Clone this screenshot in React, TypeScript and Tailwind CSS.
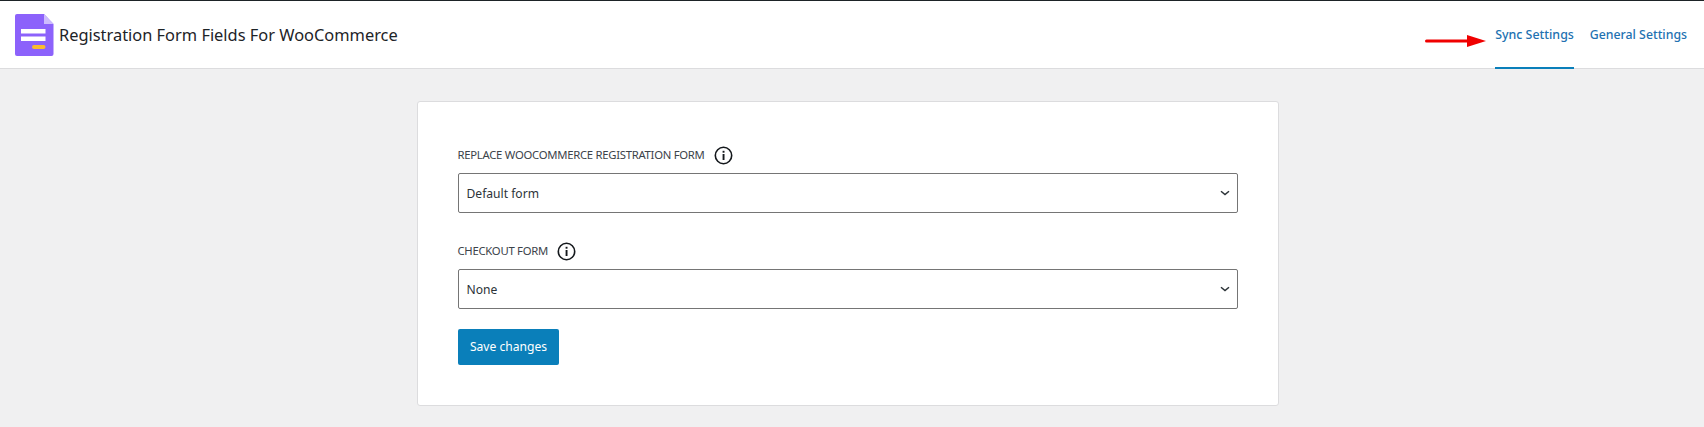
const font = "[font-family:'Noto_Sans',sans-serif]"

function FormIcon() {
  return (
    <svg width="39" height="42" viewBox="0 0 39 42" className="shrink-0 mt-px">
      <path d="M2 0H29L38.5 10V40a2 2 0 0 1-2 2H2a2 2 0 0 1-2-2V2a2 2 0 0 1 2-2Z" fill="#8c62fb" />
      <path d="M29 0L38.5 10H29Z" fill="#cdbcfd" />
      <rect x="6" y="15" width="24.5" height="4.5" fill="#ffffff" />
      <rect x="6" y="22.5" width="24.5" height="4.5" fill="#ffffff" />
      <rect x="17" y="31" width="13.5" height="4" rx="2" fill="#fbbc2c" />
    </svg>
  )
}

function InfoIcon() {
  return (
    <svg width="19" height="19" viewBox="0 0 19 19" className="shrink-0">
      <circle cx="9.5" cy="9.5" r="8.2" fill="none" stroke="#14181c" strokeWidth="1.6" />
      <rect x="8.6" y="8" width="1.9" height="6" fill="#14181c" />
      <rect x="8.6" y="4.8" width="1.9" height="1.9" fill="#14181c" />
    </svg>
  )
}

function ChevronIcon() {
  return (
    <svg width="10" height="6" viewBox="0 0 10 6" className="shrink-0">
      <path d="M1 1.2L5 4.6L9 1.2" fill="none" stroke="#2c3338" strokeWidth="1.5" />
    </svg>
  )
}

function RedArrow() {
  return (
    <svg width="62" height="14" viewBox="0 0 62 14" className="absolute left-[-70px] top-[33px]">
      <rect x="0" y="5.5" width="44" height="3" rx="1.5" fill="#f00000" />
      <path d="M42 1L61 7L42 13Z" fill="#f00000" />
    </svg>
  )
}

function SelectField({ label, value }: { label: string; value: string }) {
  return (
    <div>
      <div className="flex items-center gap-[9px] h-[20px] mb-[8px]">
        <span className="text-[11.3px] tracking-[-0.27px] text-[#3c434a] uppercase">{label}</span>
        <InfoIcon />
      </div>
      <div className="flex items-center justify-between h-[40px] pl-[8px] pr-[7px] border border-[#757575] rounded-[2px] bg-white">
        <span className="pt-[3px] text-[12.1px] text-[#2c3338]">{value}</span>
        <ChevronIcon />
      </div>
    </div>
  )
}

export default function App() {
  return (
    <div className={`min-h-[427px] bg-[#f0f0f1] ${font}`}>
      <header className="flex items-stretch justify-between h-[69px] pl-[15px] pr-[17px] bg-white border-t border-t-[#1d2327] border-b border-b-[#dcdcde]">
        <div className="flex items-center gap-[5px]">
          <FormIcon />
          <h1 className="pt-[2px] text-[16.4px] font-normal text-[#1d2327]">Registration Form Fields For WooCommerce</h1>
        </div>
        <nav className="relative flex gap-[16px]">
          <RedArrow />
          <a className="flex items-center pt-[2px] text-[12.4px] font-medium text-[#2271b1] border-b-2 border-b-[#0a7fba] -mb-px">Sync Settings</a>
          <a className="flex items-center pt-[2px] text-[12.3px] font-medium text-[#2271b1]">General Settings</a>
        </nav>
      </header>
      <main className="flex justify-center pt-[32px] pr-[9px]">
        <section className="w-[862px] h-[305px] pt-[43px] px-[40px] bg-white border border-[#dcdcde] rounded-[3px]">
          <div className="flex flex-col gap-[28px]">
            <SelectField label="Replace WooCommerce Registration Form" value="Default form" />
            <SelectField label="Checkout Form" value="None" />
          </div>
          <button className="mt-[20px] w-[101px] h-[36px] pt-[1px] pl-[1px] rounded-[2px] bg-[#0a7fba] text-[12.1px] text-white">Save changes</button>
        </section>
      </main>
    </div>
  )
}
